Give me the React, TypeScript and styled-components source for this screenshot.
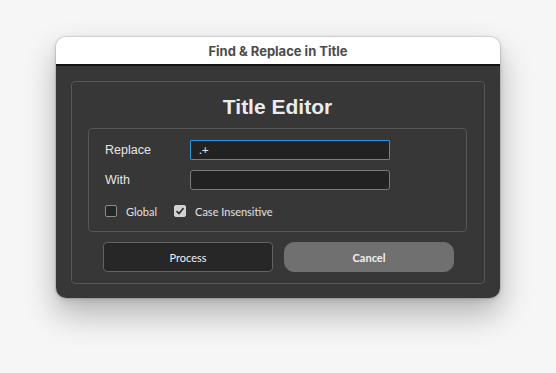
import styled, { createGlobalStyle } from "styled-components";

const Global = createGlobalStyle`
    html, body {
        margin: 0 ;
        padding: 0 ;
        background: #f6f6f6 ;
    }
    * { box-sizing: border-box ; }
`

const Page = styled.div`
    width: 556px ;
    height: 373px ;
    display: flex ;
    justify-content: center ;
    align-items: flex-start ;
    padding-top: 37px ;
`

const Window = styled.div`
    width: 444px ;
    height: 261px ;
    border-radius: 10px ;
    overflow: hidden ;
    display: flex ;
    flex-direction: column ;
    box-shadow: 0 0 0 1px rgba(0,0,0,0.10), 0 16px 32px rgba(0,0,0,0.28), 0 2px 6px rgba(0,0,0,0.12) ;
`

const TitleBar = styled.div`
    height: 29px ;
    flex-shrink: 0 ;
    background: #ffffff ;
    border-bottom: 2px solid #141414 ;
    display: flex ;
    align-items: center ;
    justify-content: center ;
    font-family: Inter, "Liberation Sans", sans-serif ;
    font-weight: 700 ;
    font-size: 13px ;
    color: #4b4b4b ;
`

const Body = styled.div`
    flex: 1 ;
    background: #373737 ;
    padding: 15px ;
    display: flex ;
`

const Group = styled.div`
    flex: 1 ;
    border: 1px solid #575757 ;
    border-radius: 4px ;
    display: flex ;
    flex-direction: column ;
    padding: 0 17px 11px 16px ;
`

const Heading = styled.div`
    text-align: center ;
    font-family: "Liberation Sans", Arial, sans-serif ;
    font-weight: 700 ;
    font-size: 21px ;
    color: #ececec ;
    height: 46px ;
    line-height: 50px ;
`

const Inner = styled.div`
    border: 1px solid #575757 ;
    border-radius: 4px ;
    padding: 11px 0 13px 16px ;
    display: flex ;
    flex-direction: column ;
    gap: 10px ;
`

const Row = styled.div`
    display: flex ;
    align-items: center ;
    height: 20px ;
`

const Label = styled.div`
    width: 85px ;
    font-family: "Liberation Sans", Arial, sans-serif ;
    font-size: 12.5px ;
    color: #e6e6e6 ;
`

const Field = styled.div<{ focused?: boolean }>`
    width: 200px ;
    height: 20px ;
    background: #222222 ;
    border: 1px solid ${p => p.focused ? "#2a93e4" : "#7a7a7a"} ;
    border-radius: ${p => p.focused ? "1px" : "3px"} ;
    font-family: Lato, sans-serif ;
    font-size: 12px ;
    color: #e6e6e6 ;
    padding-left: 8px ;
    line-height: 18px ;
`

const Checks = styled.div`
    display: flex ;
    align-items: center ;
    margin-top: 4px ;
    height: 14px ;
`

const Box = styled.span<{ checked?: boolean }>`
    width: 12px ;
    height: 12px ;
    border-radius: 2px ;
    background: ${p => p.checked ? "#d2d2d2" : "#262626"} ;
    border: 1px solid ${p => p.checked ? "#d2d2d2" : "#8c8c8c"} ;
    display: flex ;
    align-items: center ;
    justify-content: center ;
    margin-right: 9px ;
`

const CheckText = styled.span`
    font-family: Lato, sans-serif ;
    font-size: 11px ;
    color: #e2e2e2 ;
    margin-right: 17px ;
`

const Buttons = styled.div`
    display: flex ;
    gap: 11px ;
    padding-left: 15px ;
    margin-top: 10px ;
`

const Button = styled.div<{ primary?: boolean }>`
    width: 170px ;
    height: 30px ;
    display: flex ;
    align-items: center ;
    justify-content: center ;
    font-family: Lato, sans-serif ;
    font-size: 11px ;
    color: #f2f2f2 ;
    font-weight: ${p => p.primary ? 700 : 400} ;
    background: ${p => p.primary ? "#707070" : "#272727"} ;
    border: 1px solid ${p => p.primary ? "#707070" : "#626262"} ;
    border-radius: ${p => p.primary ? "10px" : "4px"} ;
`

const Check = () => (
    <svg width="10" height="10" viewBox="0 0 10 10">
        <path d="M1.5 5.2 L4 7.6 L8.6 2" fill="none" stroke="#2a2a2a" strokeWidth="1.6" />
    </svg>
)

export default function App() {
    return (
        <Page>
            <Global />
            <Window>
                <TitleBar>Find &amp; Replace in Title</TitleBar>
                <Body>
                    <Group>
                        <Heading>Title Editor</Heading>
                        <Inner>
                            <Row>
                                <Label>Replace</Label>
                                <Field focused>.+</Field>
                            </Row>
                            <Row>
                                <Label>With</Label>
                                <Field />
                            </Row>
                            <Checks>
                                <Box />
                                <CheckText>Global</CheckText>
                                <Box checked><Check /></Box>
                                <CheckText>Case Insensitive</CheckText>
                            </Checks>
                        </Inner>
                        <Buttons>
                            <Button>Process</Button>
                            <Button primary>Cancel</Button>
                        </Buttons>
                    </Group>
                </Body>
            </Window>
        </Page>
    )
}
